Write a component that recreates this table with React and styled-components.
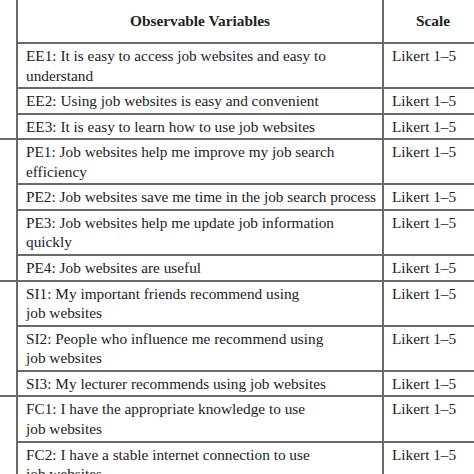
import React from "react";
import styled, { createGlobalStyle } from "styled-components";

const serif = `"Liberation Serif", "Times New Roman", Tinos, serif`;
const LineColor = "#6a6a6a";

const Global = createGlobalStyle`
  html, body { margin: 0; padding: 0; background: #fff; overflow: hidden; }
  body { width: 474px; height: 474px; font-family: ${serif}; }
`;

const Frame = styled.div`
  width: 474px;
  height: 474px;
  overflow: hidden;
  background: #fff;
`;

const Table = styled.table`
  border-collapse: collapse;
  table-layout: fixed;
  width: 482px;
  font-family: ${serif};
  font-size: 15.3px;
  line-height: 19.5px;
  color: #222;
`;

const HeadCell = styled.th`
  height: 42px;
  padding: 0 8px;
  font-family: ${serif};
  font-size: 15.3px;
  font-weight: bold;
  text-align: center;
  vertical-align: middle;
  border-left: 2px solid ${LineColor};
  border-bottom: 2px solid ${LineColor};
`;

const GroupCell = styled.td`
  padding: 0;
  border-bottom: ${(p) => (p.$open ? "none" : `2px solid ${LineColor}`)};
  border-right: 2px solid ${LineColor};
`;

const Cell = styled.td`
  padding: 2px 8px 2.1px 8px;
  vertical-align: top;
  font-family: ${serif};
  font-size: 15.3px;
  line-height: 19.5px;
  border-left: 2px solid ${LineColor};
  border-bottom: 2px solid ${LineColor};
  white-space: nowrap;
`;

const groups = [
  {
    id: "EE",
    items: [
      ["EE1: It is easy to access job websites and easy to", "understand"],
      ["EE2: Using job websites is easy and convenient"],
      ["EE3: It is easy to learn how to use job websites"],
    ],
  },
  {
    id: "PE",
    items: [
      ["PE1: Job websites help me improve my job search", "efficiency"],
      ["PE2: Job websites save me time in the job search process"],
      ["PE3: Job websites help me update job information", "quickly"],
      ["PE4: Job websites are useful"],
    ],
  },
  {
    id: "SI",
    items: [
      ["SI1: My important friends recommend using", "job websites"],
      ["SI2: People who influence me recommend using", "job websites"],
      ["SI3: My lecturer recommends using job websites"],
    ],
  },
  {
    id: "FC",
    items: [
      ["FC1: I have the appropriate knowledge to use", "job websites"],
      ["FC2: I have a stable internet connection to use", "job websites"],
    ],
  },
];

export default function App() {
  return (
    <Frame>
      <Global />
      <Table>
        <colgroup>
          <col style={{ width: 17 }} />
          <col style={{ width: 366 }} />
          <col style={{ width: 99 }} />
        </colgroup>
        <thead>
          <tr>
            <GroupCell as="th" $open />
            <HeadCell>Observable Variables</HeadCell>
            <HeadCell>Scale</HeadCell>
          </tr>
        </thead>
        <tbody>
          {groups.map((g) =>
            g.items.map((lines, i) => (
              <tr key={g.id + i}>
                {i === 0 && <GroupCell rowSpan={g.items.length} />}
                <Cell>
                  {lines.map((l, k) => (
                    <React.Fragment key={k}>
                      {k > 0 && <br />}
                      {l}
                    </React.Fragment>
                  ))}
                </Cell>
                <Cell>Likert 1–5</Cell>
              </tr>
            ))
          )}
        </tbody>
      </Table>
    </Frame>
  );
}
